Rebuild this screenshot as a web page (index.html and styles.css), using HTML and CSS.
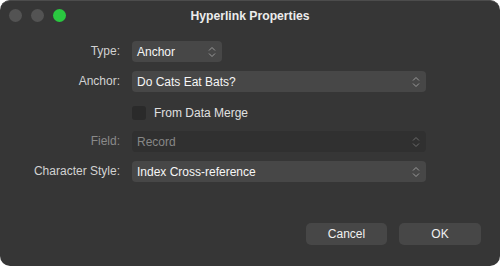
FILE: index.html
```html
<!DOCTYPE html>
<html lang="en">
<head>
    <meta charset="UTF-8">
    <title>Hyperlink Properties</title>
    <link rel="stylesheet" href="styles.css">
</head>
<body>

<div class="window">
    <div class="titlebar">
        <div class="lights">
            <span class="light"></span>
            <span class="light"></span>
            <span class="light green"></span>
        </div>
        <div class="title">Hyperlink Properties</div>
    </div>

    <div class="form">
        <label class="label">Type:</label>
        <div class="popup short">
            <span>Anchor</span>
            <svg class="arrows" width="8" height="12" viewBox="0 0 8 12"><path d="M1 4.5 L4 1.5 L7 4.5 M1 7.5 L4 10.5 L7 7.5" /></svg>
        </div>

        <label class="label">Anchor:</label>
        <div class="popup">
            <span>Do Cats Eat Bats?</span>
            <svg class="arrows" width="8" height="12" viewBox="0 0 8 12"><path d="M1 4.5 L4 1.5 L7 4.5 M1 7.5 L4 10.5 L7 7.5" /></svg>
        </div>

        <span></span>
        <div class="check-row">
            <span class="checkbox"></span>
            <span class="check-text">From Data Merge</span>
        </div>

        <label class="label disabled">Field:</label>
        <div class="popup off">
            <span>Record</span>
            <svg class="arrows" width="8" height="12" viewBox="0 0 8 12"><path d="M1 4.5 L4 1.5 L7 4.5 M1 7.5 L4 10.5 L7 7.5" /></svg>
        </div>

        <label class="label">Character Style:</label>
        <div class="popup">
            <span>Index Cross-reference</span>
            <svg class="arrows" width="8" height="12" viewBox="0 0 8 12"><path d="M1 4.5 L4 1.5 L7 4.5 M1 7.5 L4 10.5 L7 7.5" /></svg>
        </div>
    </div>

    <div class="buttons">
        <button class="btn cancel">Cancel</button>
        <button class="btn">OK</button>
    </div>
</div>

</body>
</html>
```

FILE: styles.css
```css
body {
    margin: 0;
    background: #fff;
    font-family: "Liberation Sans", Arial, sans-serif;
    font-size: 12px;
}
.window {
    width: 500px;
    height: 266px;
    box-sizing: border-box;
    background: #363636;
    border-top: 1px solid #4c4c4c;
    border-radius: 10px;
    overflow: hidden;
    position: relative;
}
.titlebar {
    height: 30px;
    display: flex;
    align-items: center;
    justify-content: center;
    position: relative;
}
.lights {
    position: absolute;
    left: 9px;
    top: 8px;
    display: flex;
    gap: 9px;
}
.light {
    width: 13px;
    height: 13px;
    border-radius: 50%;
    background: #535353;
}
.light.green {
    background: #2ac840;
}
.title {
    color: #ececec;
    font-weight: bold;
    font-size: 12.2px;
}
.form {
    display: grid;
    grid-template-columns: 120px 294px;
    grid-auto-rows: 21px;
    column-gap: 12px;
    row-gap: 9px;
    margin-top: 10px;
}
.label {
    color: #d2d2d2;
    text-align: right;
    line-height: 21px;
}
.label.disabled {
    color: #8a8a8a;
}
.popup {
    display: flex;
    align-items: center;
    justify-content: space-between;
    background: #474747;
    border-radius: 4px;
    padding: 0 6px 0 5px;
    color: #f6f6f6;
}
.popup.short {
    width: 90px;
    box-sizing: border-box;
}
.popup.off {
    background: #303030;
    color: #878787;
}
.arrows {
    fill: none;
    stroke: #9a9a9a;
    stroke-width: 1;
}
.popup.off .arrows {
    stroke: #6a6a6a;
}
.check-row {
    display: flex;
    align-items: flex-start;
    gap: 8px;
}
.checkbox {
    width: 14px;
    height: 14px;
    margin-top: 5px;
    background: #2a2a2a;
    border-radius: 3px;
}
.check-text {
    color: #e0e0e0;
    line-height: 14px;
    margin-top: 5px;
}
.buttons {
    display: flex;
    justify-content: flex-end;
    gap: 12px;
    padding-right: 19px;
    margin-top: 41px;
}
.btn {
    width: 82px;
    height: 22px;
    background: #474747;
    color: #f0f0f0;
    border: none;
    border-radius: 5px;
    font-family: "Liberation Sans", Arial, sans-serif;
    font-size: 12px;
}
.btn.cancel {
    width: 81px;
}
```
